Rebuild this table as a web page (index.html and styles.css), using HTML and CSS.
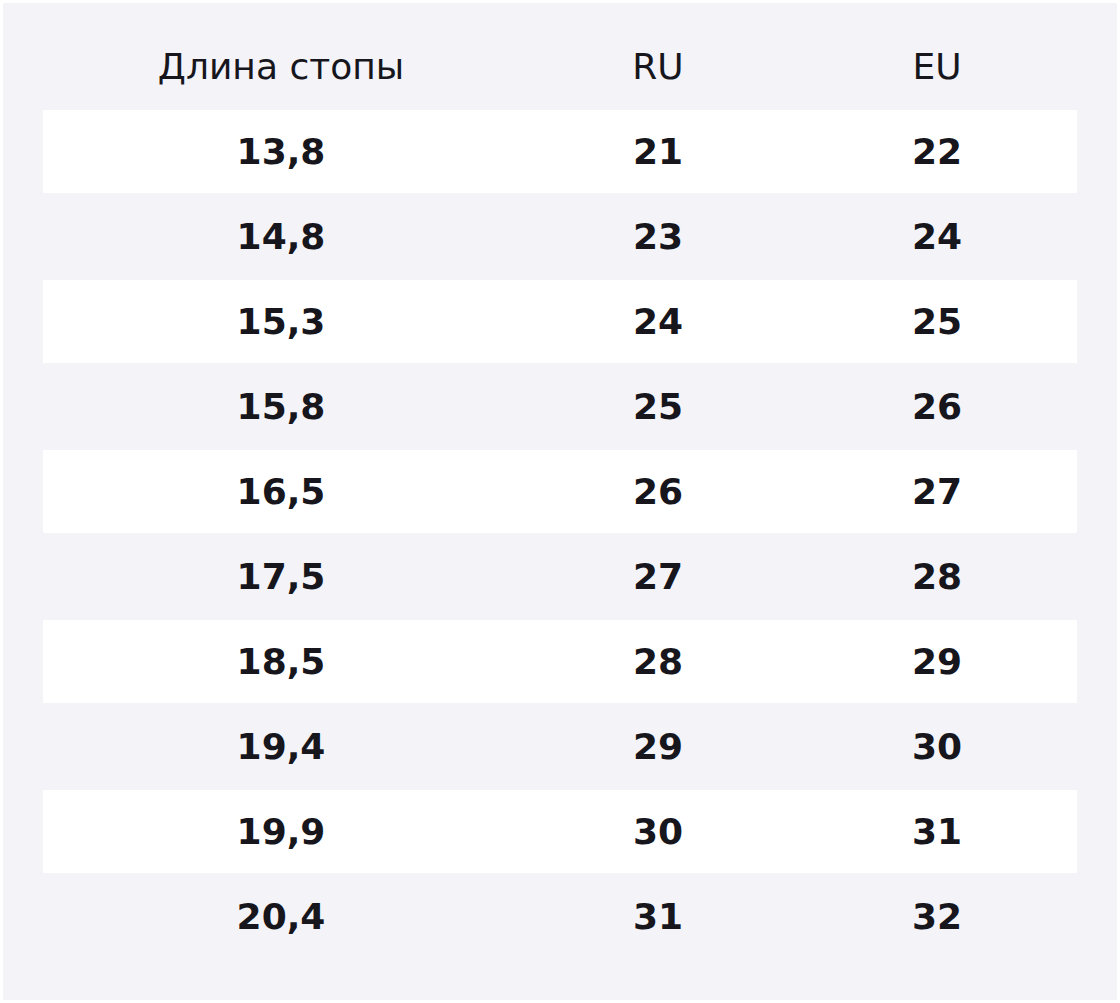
FILE: index.html
```html
<!DOCTYPE html>
<html lang="ru">
<head>
<meta charset="utf-8">
<link rel="stylesheet" href="styles.css">
</head>
<body>
<div class="sizes">
  <div class="row head"><div>Длина стопы</div><div>RU</div><div>EU</div></div>
  <div class="row odd"><div>13,8</div><div>21</div><div>22</div></div>
  <div class="row even"><div>14,8</div><div>23</div><div>24</div></div>
  <div class="row odd"><div>15,3</div><div>24</div><div>25</div></div>
  <div class="row even"><div>15,8</div><div>25</div><div>26</div></div>
  <div class="row odd"><div>16,5</div><div>26</div><div>27</div></div>
  <div class="row even"><div>17,5</div><div>27</div><div>28</div></div>
  <div class="row odd"><div>18,5</div><div>28</div><div>29</div></div>
  <div class="row even"><div>19,4</div><div>29</div><div>30</div></div>
  <div class="row odd"><div>19,9</div><div>30</div><div>31</div></div>
  <div class="row even"><div>20,4</div><div>31</div><div>32</div></div>
</div>
</body>
</html>
```
FILE: styles.css
```css
html, body {
  margin: 0;
  background: #ffffff;
}
body {
  padding: 3px;
  font-family: "DejaVu Sans", sans-serif;
  color: #16161c;
}
.sizes {
  width: 1114px;
  height: 997px;
  box-sizing: border-box;
  background: #f3f3f8;
  padding: 20px 40px 40px;
}
.row {
  display: grid;
  grid-template-columns: 476px 278px 1fr;
  align-items: center;
  text-align: center;
  font-size: 36px;
  font-weight: 700;
}
.head {
  height: 87px;
  font-weight: 400;
}
.odd {
  height: 83px;
  background: #ffffff;
}
.even {
  height: 87px;
}
```
